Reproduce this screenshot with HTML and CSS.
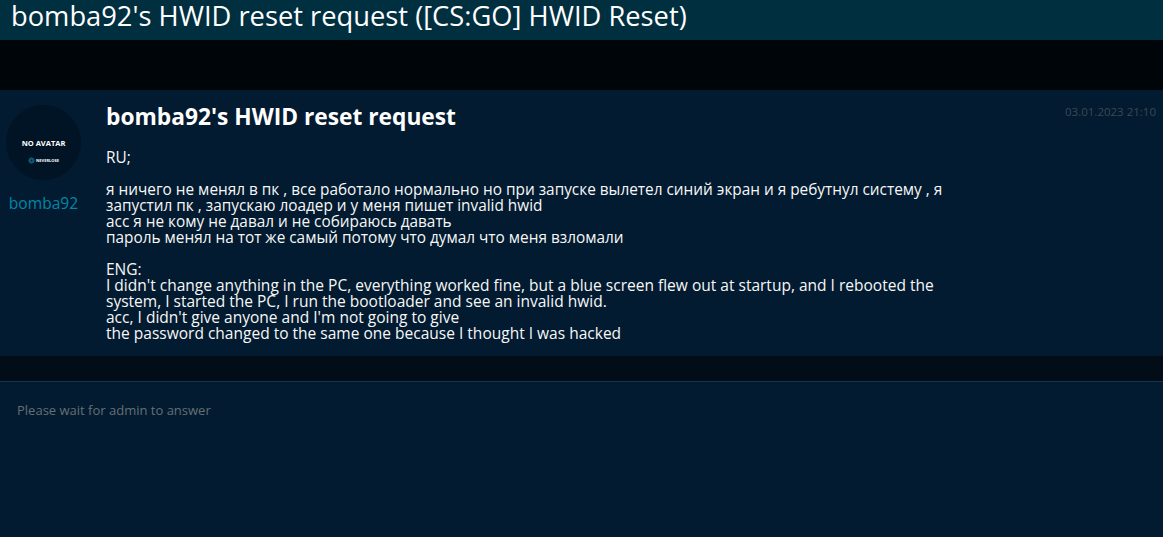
FILE: index.html
```html
<!DOCTYPE html>
<html lang="en">
<head>
<meta charset="utf-8">
<title>HWID reset request</title>
<link rel="stylesheet" href="styles.css">
</head>
<body>
<header class="topbar"><h1 class="topbar-title">bomba92's HWID reset request ([CS:GO] HWID Reset)</h1></header>
<div class="gap-top"></div>
<section class="post">
  <aside class="author">
    <div class="avatar">
      <span class="avatar-text">NO AVATAR</span>
      <span class="avatar-brand">
        <svg class="brand-icon" viewBox="0 0 10 10" aria-hidden="true"><path d="M5 .5 8.2 1.8 9.5 5 8.2 8.2 5 9.5 1.8 8.2.5 5 1.8 1.8Z" fill="#0d5a78"/><circle cx="5" cy="5" r="1.3" fill="#02263a"/></svg>
        <span class="brand-text">NEVERLOSE</span>
      </span>
    </div>
    <div class="author-name">bomba92</div>
  </aside>
  <div class="post-main">
    <h2 class="post-title">bomba92's HWID reset request</h2>
    <p class="post-body post-ru">RU;<br><br>я ничего не менял в пк , все работало нормально но при запуске вылетел синий экран и я ребутнул систему , я<br>запустил пк , запускаю лоадер и у меня пишет invalid hwid<br>асс я не кому не давал и не собираюсь давать<br>пароль менял на тот же самый потому что думал что меня взломали</p>
    <p class="post-body post-en">ENG:<br>I didn't change anything in the PC, everything worked fine, but a blue screen flew out at startup, and I rebooted the<br>system, I started the PC, I run the bootloader and see an invalid hwid.<br>acc, I didn't give anyone and I'm not going to give<br>the password changed to the same one because I thought I was hacked</p>
  </div>
  <time class="post-date">03.01.2023 21:10</time>
</section>
<div class="gap-bottom"></div>
<footer class="notice">Please wait for admin to answer</footer>
</body>
</html>
```
FILE: styles.css
```css
* { box-sizing: border-box; }
html, body { margin: 0; height: 100%; }
body {
  display: flex;
  flex-direction: column;
  min-height: 537px;
  overflow: hidden;
  background: #021b30;
  font-family: "Open Sans", "Noto Sans", sans-serif;
  color: #fff;
}
.topbar { height: 40px; background: #002f40; padding-left: 11px; flex: none; }
.topbar-title { margin: 0; font-size: 27.3px; font-weight: 400; line-height: 32px; }
.gap-top { height: 50px; background: #00050a; flex: none; }
.post { height: 266px; flex: none; display: flex; background: #021b30; padding: 15px 7px 0 6px; }
.author { width: 75px; flex: none; display: flex; flex-direction: column; align-items: center; }
.avatar {
  width: 75px; height: 75px; border-radius: 50%; background: #011425;
  display: flex; flex-direction: column; align-items: center; padding-top: 33px;
}
.avatar-text { font-size: 7.5px; font-weight: 700; line-height: 11px; white-space: nowrap; }
.avatar-brand { display: flex; align-items: center; gap: 1px; margin-top: 8px; }
.brand-icon { width: 7px; height: 7px; }
.brand-text { font-size: 4px; font-weight: 700; line-height: 7px; }
.author-name { margin-top: 13px; font-size: 15.6px; line-height: 20px; color: #0088aa; white-space: nowrap; }
.post-main { flex: 1; padding-left: 25px; }
.post-title { margin: 0 0 21px; font-size: 22.75px; font-weight: 700; line-height: 24px; }
.post-body { margin: 0; line-height: 16px; color: #f7f7f7; white-space: nowrap; }
.post-ru { font-size: 15.37px; margin-bottom: 15px; }
.post-en { font-size: 15.52px; }
.post-date { flex: none; font-size: 11.5px; line-height: 14px; color: #3c4855; }
.gap-bottom { height: 25px; flex: none; background: #020d18; }
.notice {
  flex: 1; border-top: 1px solid #12364d; background: #021b30;
  padding: 20px 17px; font-size: 13px; line-height: 16px; color: #666f76;
}
```
